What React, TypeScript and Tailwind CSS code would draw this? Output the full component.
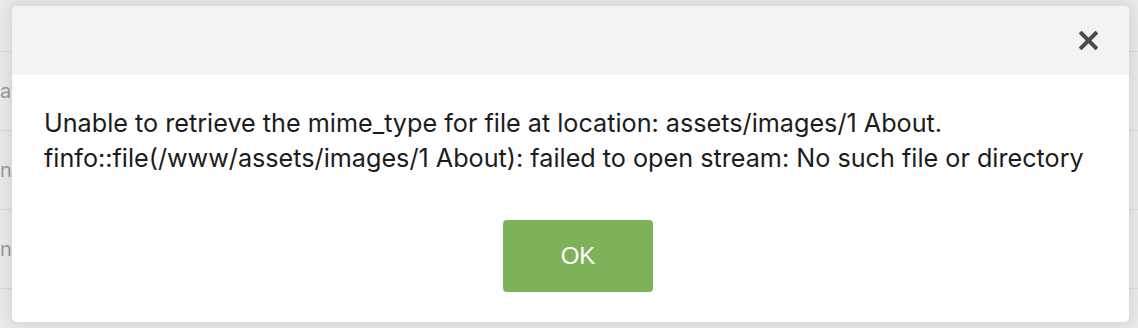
import React from "react";

export default function App() {
  const rows = ["at", "ne", "n"];
  return (
    <div
      className="relative w-[1138px] h-[328px] overflow-hidden bg-[#e8e8e8]"
      style={{ fontFamily: "Inter, 'Liberation Sans', Arial, sans-serif" }}
    >
      {/* background page (dimmed) */}
      <div className="flex flex-col">
        <div className="h-[52px] border-b border-[#d9d9d9] pl-[318px] pt-[4px] text-[20px] text-[#8a8a8a] leading-[20px]">
          presentation has to be something
        </div>
        {rows.map((r) => (
          <div
            key={r}
            className="h-[79px] border-b border-[#d9d9d9] flex items-center text-[20px] text-[#9a9a9a]"
          >
            {r}
          </div>
        ))}
      </div>

      {/* modal */}
      <div className="absolute left-[12px] top-[6px] w-[1117px] h-[316px] bg-white rounded-[5px] shadow-[0_0_14px_rgba(0,0,0,0.12)] overflow-hidden flex flex-col">
        <div className="h-[69px] bg-[#f3f3f3] flex items-center justify-end pr-[31px]">
          <svg width="19" height="19" viewBox="0 0 19 19">
            <path d="M2.5 2.5 L16.5 16.5 M16.5 2.5 L2.5 16.5" stroke="#4b4b4b" strokeWidth="4" strokeLinecap="square" fill="none" />
          </svg>
        </div>
        <div className="px-[32px] pt-[31px] text-[25.2px] leading-[35px] text-[#1c1c1c] whitespace-nowrap">
          <p>Unable to retrieve the mime_type for file at location: assets/images/1 About.</p>
          <p>finfo::file(/www/assets/images/1 About): failed to open stream: No such file or directory</p>
        </div>
        <div className="flex justify-center pl-[15px] mt-[44px]">
          <button
            className="w-[150px] h-[72px] rounded-[4px] bg-[#7db15a] text-white text-[24px]"
            style={{ fontFamily: "'Liberation Sans', Arial, sans-serif" }}
          >
            OK
          </button>
        </div>
      </div>
    </div>
  );
}
